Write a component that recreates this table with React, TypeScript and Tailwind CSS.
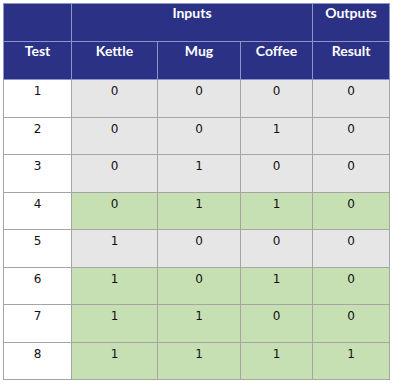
const rows = [
  { test: 1, kettle: 0, mug: 0, coffee: 0, result: 0, green: false },
  { test: 2, kettle: 0, mug: 0, coffee: 1, result: 0, green: false },
  { test: 3, kettle: 0, mug: 1, coffee: 0, result: 0, green: false },
  { test: 4, kettle: 0, mug: 1, coffee: 1, result: 0, green: true },
  { test: 5, kettle: 1, mug: 0, coffee: 0, result: 0, green: false },
  { test: 6, kettle: 1, mug: 0, coffee: 1, result: 0, green: true },
  { test: 7, kettle: 1, mug: 1, coffee: 0, result: 0, green: true },
  { test: 8, kettle: 1, mug: 1, coffee: 1, result: 1, green: true },
];

const head = "border border-[#8c94c8] bg-[#2b3185] align-top pt-0 leading-[17px] text-center text-[14px] font-bold text-white";

export default function App() {
  return (
    <div className="h-[385px] w-[394px] bg-white pl-[3px] pt-[3px]">
      <table className="table-fixed border-collapse" style={{ fontFamily: "Lato, 'Open Sans', sans-serif" }}>
        <colgroup>
          <col className="w-[68px]" />
          <col className="w-[86px]" />
          <col className="w-[83px]" />
          <col className="w-[72px]" />
          <col className="w-[77px]" />
        </colgroup>
        <thead>
          <tr className="h-[38px]">
            <th className={head}></th>
            <th colSpan={3} className={head}>Inputs</th>
            <th className={head}>Outputs</th>
          </tr>
          <tr className="h-[38px]">
            <th className={head}>Test</th>
            <th className={head}>Kettle</th>
            <th className={head}>Mug</th>
            <th className={head}>Coffee</th>
            <th className={head}>Result</th>
          </tr>
        </thead>
        <tbody className="font-['DejaVu_Sans',sans-serif] text-[12px] text-[#111]">
          {rows.map((r, i) => {
            const bg = r.green ? "bg-[#c6e0b4]" : "bg-[#e7e6e6]";
            const cell = `border border-[#a5a5a5] align-top pt-[2px] text-center ${bg}`;
            return (
              <tr key={r.test} className={i % 2 === 0 ? "h-[38px]" : "h-[37px]"}>
                <td className="border border-[#a5a5a5] bg-white pt-[2px] text-center align-top">{r.test}</td>
                <td className={cell}>{r.kettle}</td>
                <td className={cell}>{r.mug}</td>
                <td className={cell}>{r.coffee}</td>
                <td className={cell}>{r.result}</td>
              </tr>
            );
          })}
        </tbody>
      </table>
    </div>
  );
}
